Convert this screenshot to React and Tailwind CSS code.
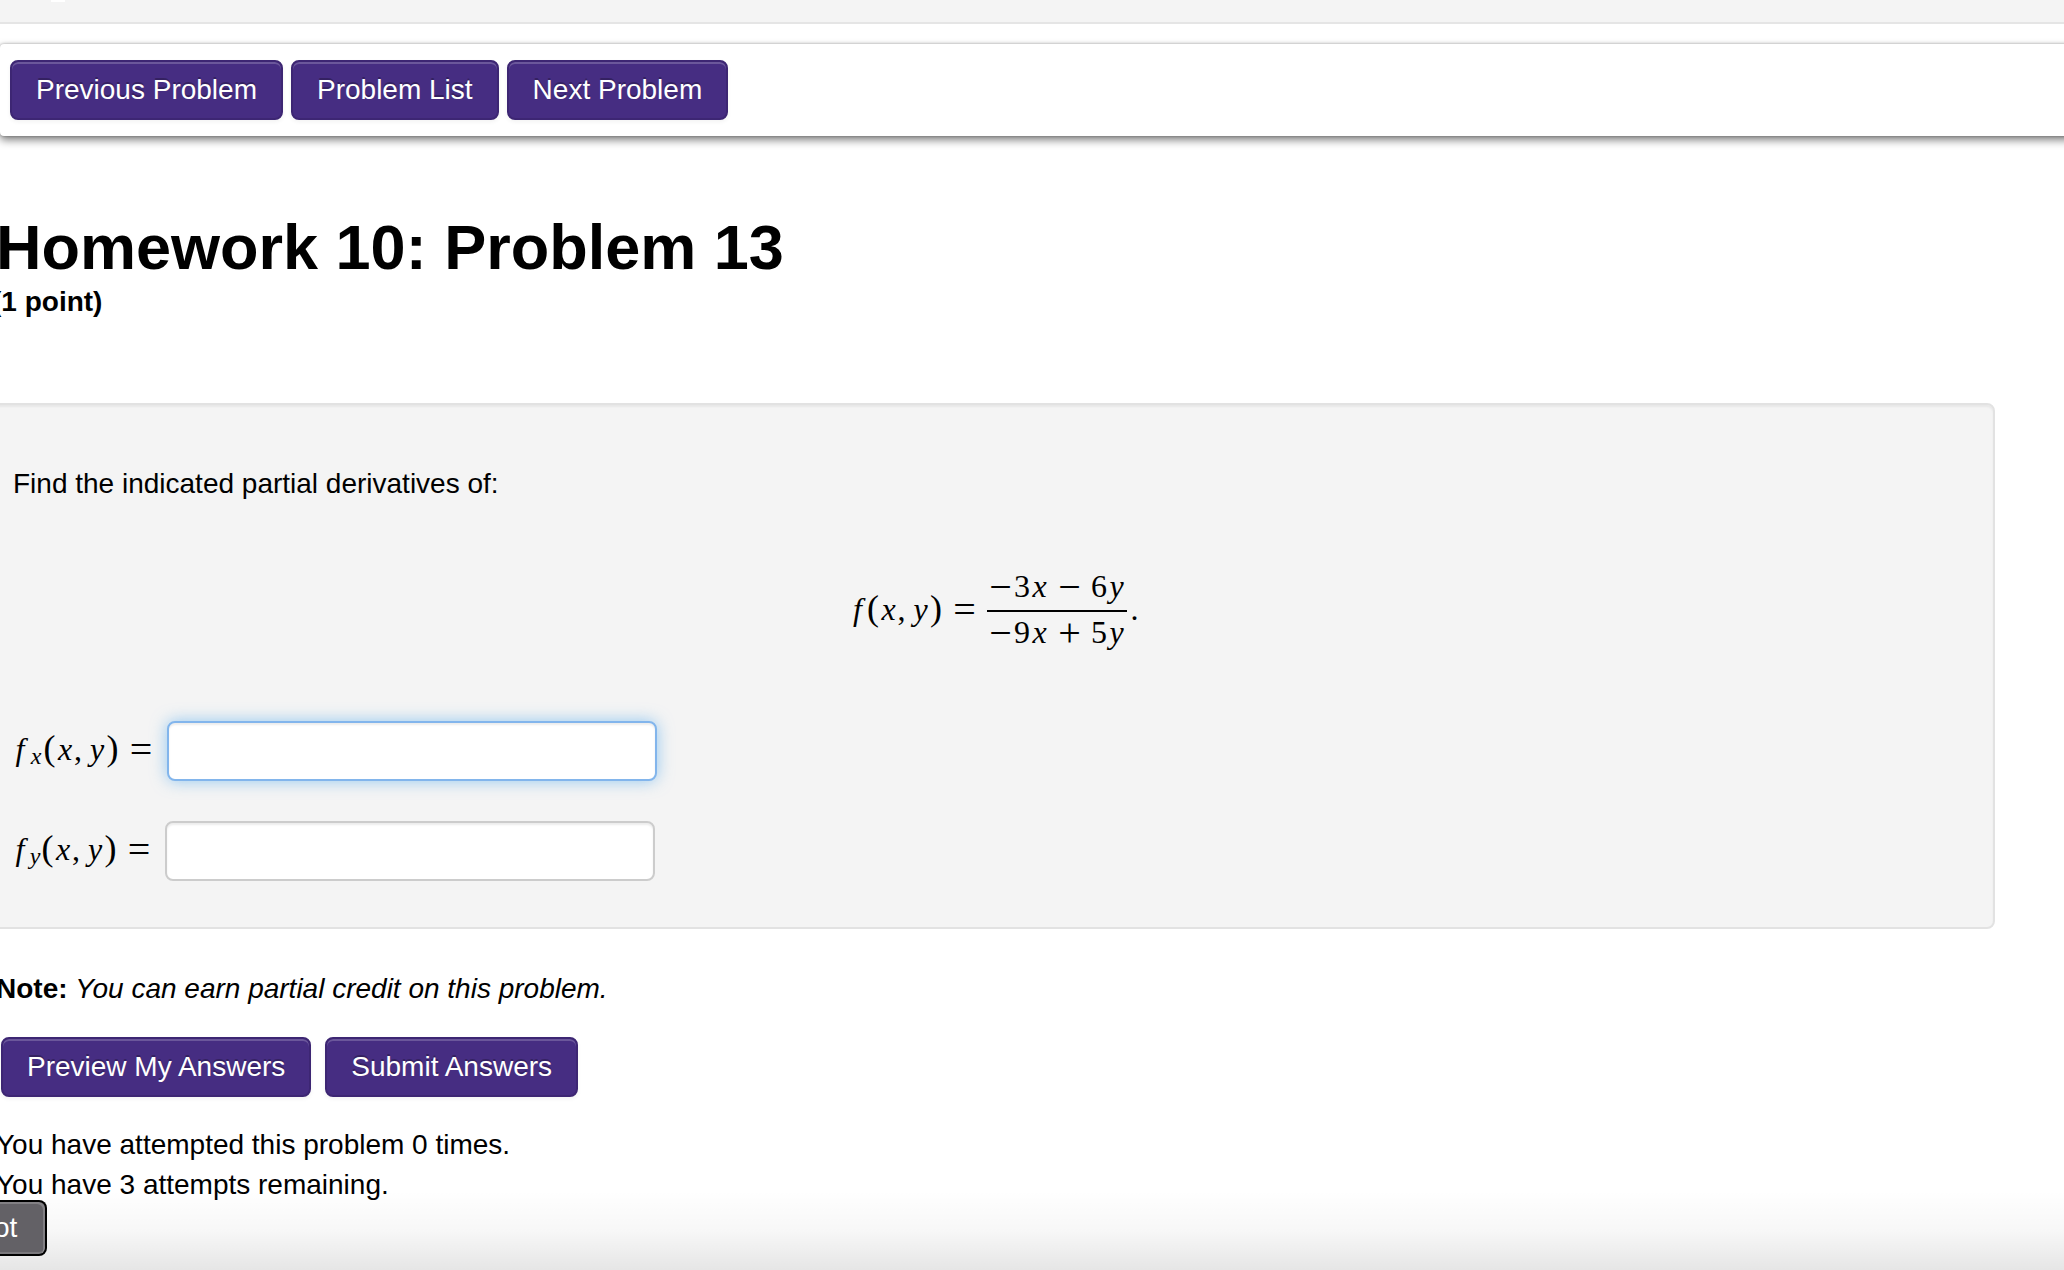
import { useState } from "react";

const navLinks = ["Previous Problem", "Problem List", "Next Problem"];

const buttonClass =
  "block rounded-lg border-2 border-[#3d2673] bg-[#462d82] px-6 py-2 text-[28px] leading-10 text-white shadow-[inset_0_2px_0_rgba(255,255,255,0.2),0_2px_4px_rgba(0,0,0,0.05)] [text-shadow:0_-2px_0_rgba(0,0,0,0.25)]";

const inputClass =
  "h-15 w-[490px] rounded-lg border-2 bg-white px-3 text-[28px] text-black outline-none";

// Math pieces, each in a box as wide as the glyph advance
function Var({ children }) {
  return <span className="inline-block w-[18px] text-center italic">{children}</span>;
}

function Digit({ children }) {
  return <span className="inline-block w-[17px] text-center">{children}</span>;
}

function Paren({ children }) {
  return (
    <span className="inline-block w-[13px] text-center text-[36px] leading-9">{children}</span>
  );
}

function Op({ children }) {
  return (
    <span className="inline-block w-[26px] translate-y-[3px] text-center text-[40px] leading-[34px]">
      {children}
    </span>
  );
}

function Call({ sub }) {
  return (
    <>
      <Var>f</Var>
      {sub && (
        <span
          className={`inline-block translate-y-1 text-center text-[24px] leading-6 italic ${
            sub === "x" ? "w-[14px]" : "w-[12px]"
          }`}
        >
          {sub}
        </span>
      )}
      <Paren>(</Paren>
      <Var>x</Var>
      <span className="mr-1.5">,</span>
      <Var>y</Var>
      <Paren>)</Paren>
    </>
  );
}

function AnswerRow({ sub, value, onChange, focused }) {
  const id = `answer-${sub}`;
  return (
    <div className="-ml-0.5 flex items-center gap-[13px]">
      <label
        htmlFor={id}
        className="flex items-baseline pb-1 font-['Liberation_Serif',serif] text-[32px] leading-10"
      >
        <Call sub={sub} />
        <span className="ml-[9px] leading-[34px]">
          <Op>=</Op>
        </span>
      </label>
      <input
        id={id}
        type="text"
        value={value}
        onChange={(e) => onChange(e.target.value)}
        className={`${inputClass} ${
          focused
            ? "border-[#82b5ec] shadow-[inset_0_2px_2px_rgba(0,0,0,0.075),0_0_16px_rgba(82,168,236,0.6)]"
            : "border-[#cccccc] shadow-[inset_0_2px_2px_rgba(0,0,0,0.075)]"
        }`}
      />
    </div>
  );
}

export default function App() {
  const [answers, setAnswers] = useState({ x: "", y: "" });

  return (
    <div className="relative min-h-screen overflow-hidden bg-white font-['Liberation_Sans',Arial,sans-serif] text-[28px] leading-10 text-black">
      {/* Breadcrumb bar, scrolled almost out of view */}
      <div className="h-6 border-b-2 border-[#e5e5e5] bg-[#f4f4f4] pl-[51px]">
        <div className="h-[2px] w-[14px] bg-white" />
      </div>

      {/* Problem navigation */}
      <nav className="-mr-2 mt-5 flex gap-2 rounded-l bg-white py-4 pl-[10px] shadow-[0_4px_8px_rgba(0,0,0,0.5),0_0_3px_rgba(0,0,0,0.3)]">
        {navLinks.map((text) => (
          <a key={text} href="#" className={buttonClass}>
            {text}
          </a>
        ))}
      </nav>

      <main className="-ml-1 mt-[76px]">
        <h1 className="text-[63px] leading-[70px] font-bold">Homework 10: Problem 13</h1>
        <p className="-ml-1 font-bold">(1 point)</p>

        {/* Problem body */}
        <section className="-ml-1 mr-[69px] mt-[81px] rounded-lg border-2 border-[#e2e2e2] bg-[#f4f4f4] px-[19px] pt-[59px] pb-[46px] shadow-[inset_0_2px_2px_rgba(0,0,0,0.05)]">
          <p>Find the indicated partial derivatives of:</p>

          <div className="mt-[62px] flex items-center justify-center font-['Liberation_Serif',serif] text-[32px]">
            <div className="flex items-baseline">
              <Call />
              <span className="mx-[9px] leading-[34px]">
                <Op>=</Op>
              </span>
            </div>
            <div className="flex flex-col items-center">
              <div className="flex items-baseline border-b-2 border-black px-px pb-1">
                <Op>−</Op>
                <Digit>3</Digit>
                <Var>x</Var>
                <span className="mx-2 leading-[34px]">
                  <Op>−</Op>
                </span>
                <Digit>6</Digit>
                <Var>y</Var>
              </div>
              <div className="flex items-baseline">
                <Op>−</Op>
                <Digit>9</Digit>
                <Var>x</Var>
                <span className="mx-2 leading-[34px]">
                  <Op>+</Op>
                </span>
                <Digit>5</Digit>
                <Var>y</Var>
              </div>
            </div>
            <span className="ml-1">.</span>
          </div>

          <div className="mt-[69px] flex flex-col gap-10">
            <AnswerRow
              sub="x"
              focused
              value={answers.x}
              onChange={(x) => setAnswers({ ...answers, x })}
            />
            <AnswerRow
              sub="y"
              value={answers.y}
              onChange={(y) => setAnswers({ ...answers, y })}
            />
          </div>
        </section>

        <p className="mt-10">
          <b>Note:</b> <i>You can earn partial credit on this problem.</i>
        </p>

        <div className="mt-7 ml-[5px] flex gap-[14px]">
          <button type="button" className={buttonClass}>
            Preview My Answers
          </button>
          <button type="button" className={buttonClass}>
            Submit Answers
          </button>
        </div>

        <p className="mt-7">
          You have attempted this problem 0 times.
          <br />
          You have 3 attempts remaining.
        </p>
      </main>

      {/* Shade along the lower edge of the window */}
      <div className="pointer-events-none absolute inset-x-0 bottom-0 h-20 bg-linear-to-b from-transparent via-black/3 to-black/10" />

      <button
        type="button"
        className="absolute bottom-[14px] -left-1.5 h-14 rounded-r-lg border-2 border-l-0 border-black bg-[#636166] pr-7 text-[28px] leading-10 text-white shadow-[inset_-2px_2px_0_rgba(255,255,255,0.2),inset_0_-2px_0_rgba(255,255,255,0.15)]"
      >
        ot
      </button>
    </div>
  );
}
